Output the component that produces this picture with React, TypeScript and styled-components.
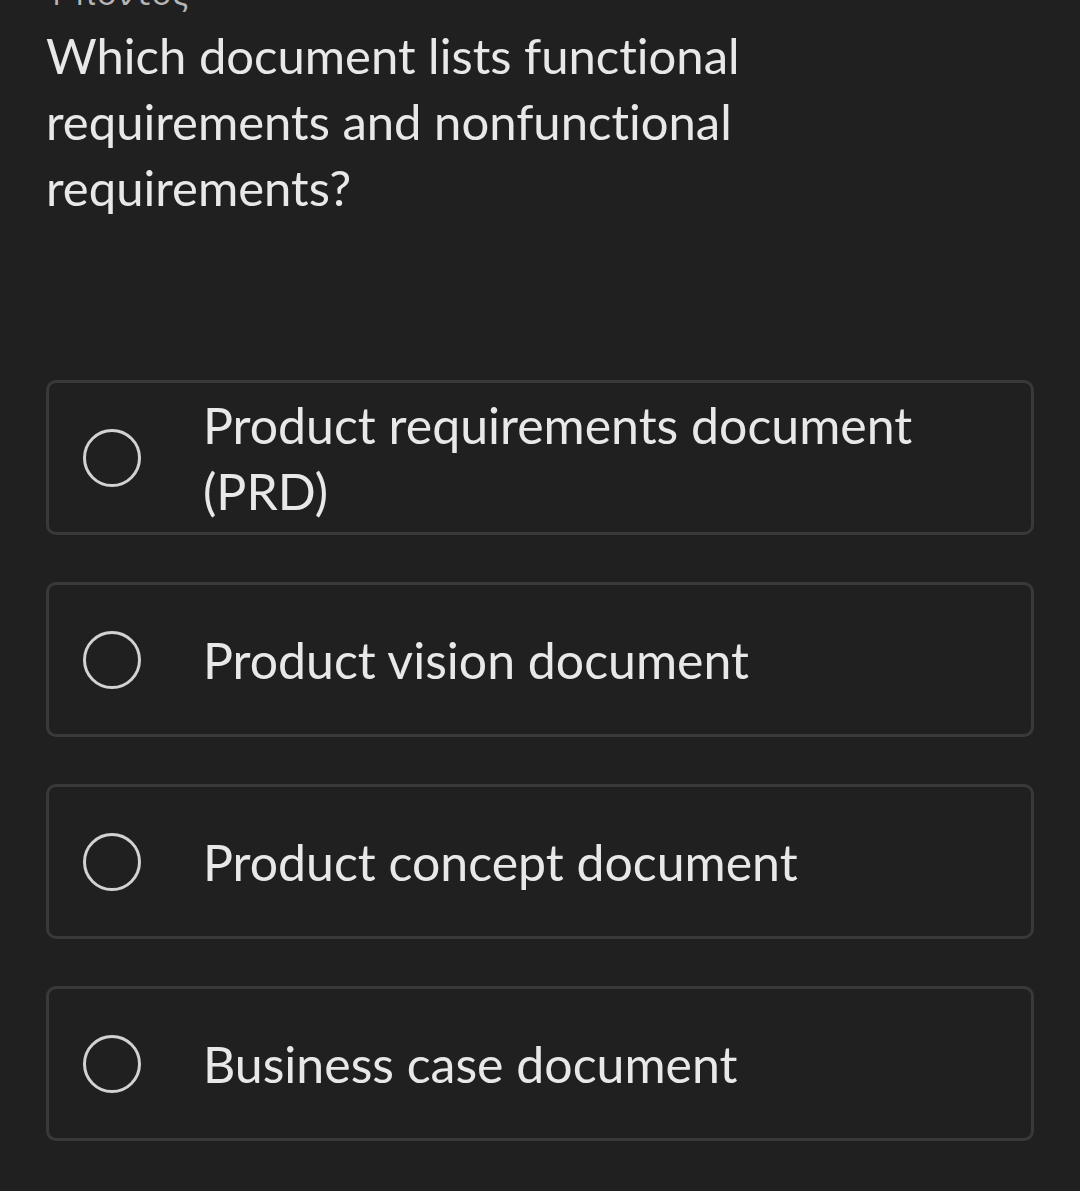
import React, { ReactElement } from "react";
import styled, { createGlobalStyle } from "styled-components";

const GlobalStyle = createGlobalStyle`
  html, body {
    margin: 0;
    padding: 0;
    background: #202020;
  }
  body {
    font-family: Lato, "Noto Sans", sans-serif;
    font-variant-ligatures: none;
    color: #e6e6e6;
  }
`;

const options = [
  "Product requirements document (PRD)",
  "Product vision document",
  "Product concept document",
  "Business case document",
];

function App(): ReactElement {
  return (
    <Page>
      <GlobalStyle />
      <Points>1 πόντος</Points>
      <Question>
        Which document lists functional requirements and nonfunctional
        requirements?
      </Question>
      <OptionList>
        {options.map((label) => (
          <Option key={label}>
            <Radio />
            <OptionLabel>{label}</OptionLabel>
          </Option>
        ))}
      </OptionList>
    </Page>
  );
}

const Page = styled.div`
  padding: 0 46px;
  height: 1191px;
  overflow: hidden;
  background: #202020;
`;

const Points = styled.div`
  font-family: "Open Sans", "Noto Sans", sans-serif;
  font-size: 34px;
  line-height: 44px;
  margin-top: -30px;
  color: #b5b5b5;
`;

const Question = styled.h1`
  margin: 8px 0 0;
  width: 760px;
  font-size: 49px;
  font-weight: 400;
  line-height: 66px;
  color: #e8e8e8;
`;

const OptionList = styled.div`
  display: flex;
  flex-direction: column;
  gap: 47px;
  margin-top: 160px;
`;

const Option = styled.label`
  display: flex;
  align-items: center;
  min-height: 155px;
  box-sizing: border-box;
  border: 3px solid #393939;
  border-radius: 10px;
  padding: 8px 34px;
`;

const Radio = styled.span`
  flex: none;
  width: 58px;
  height: 58px;
  box-sizing: border-box;
  border: 3px solid #d2d2d2;
  border-radius: 50%;
`;

const OptionLabel = styled.span`
  margin-left: 62px;
  max-width: 730px;
  font-size: 50px;
  line-height: 66px;
  color: #e8e8e8;
`;

export default App;
